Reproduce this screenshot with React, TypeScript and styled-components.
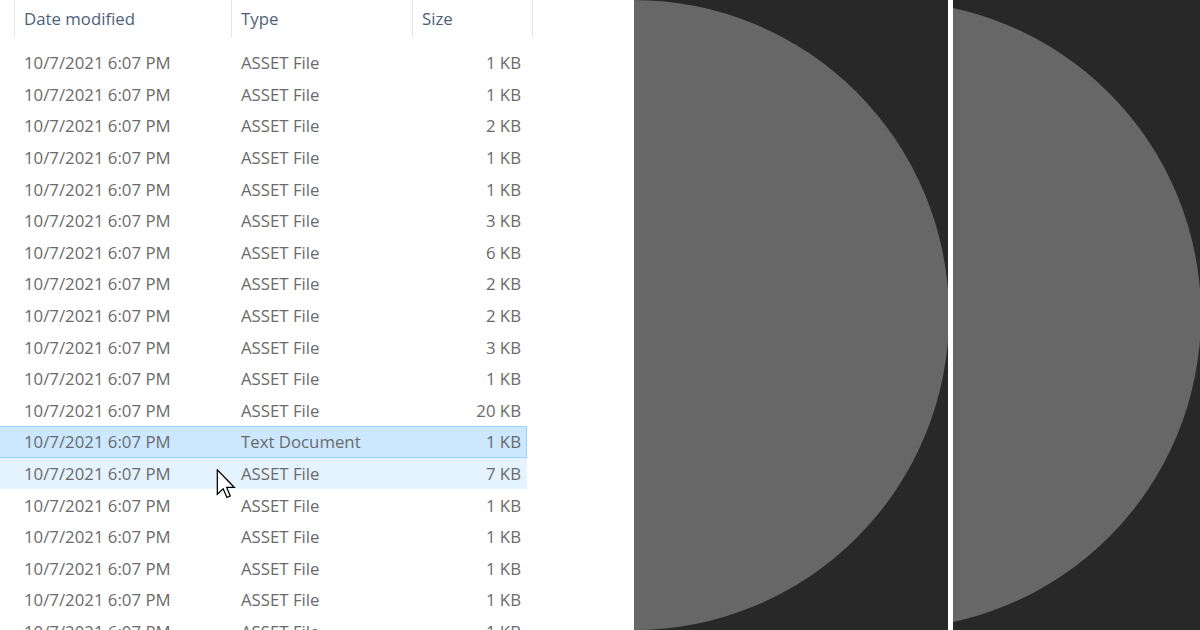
import React from "react";
import styled, { createGlobalStyle } from "styled-components";

const Global = createGlobalStyle`
  html, body { margin: 0; padding: 0; background: #fff; }
  body { font-family: "Open Sans", "Noto Sans", sans-serif; }
`;

const Page = styled.div`
  display: flex;
  width: 1200px;
  height: 630px;
  overflow: hidden;
  background: #fff;
`;

const Explorer = styled.div`
  position: relative;
  width: 634px;
  flex: none;
  background: #fff;
  font-family: "Open Sans", "Noto Sans", sans-serif;
  font-size: 16.8px;
`;

const Header = styled.div`
  display: flex;
  height: 47px;
  padding-left: 14px;
`;

const HeadCell = styled.div<{ $w: number; $last?: boolean }>`
  width: ${(p) => p.$w}px;
  box-sizing: border-box;
  height: 37px;
  padding: 7px 0 0 9px;
  color: #4c607a;
  border-left: 1px solid #e5e5e5;
  border-right: ${(p) => (p.$last ? "1px solid #e5e5e5" : "none")};
  line-height: 24px;
`;

const Rows = styled.div`
  display: flex;
  flex-direction: column;
`;

const Row = styled.div<{ $state?: "sel" | "hover" }>`
  display: grid;
  grid-template-columns: 231px 181px 1fr;
  align-items: center;
  width: 527px;
  height: 31.6px;
  box-sizing: border-box;
  flex: none;
  color: #6a6a6a;
  background: ${(p) =>
    p.$state === "sel" ? "#cce8ff" : p.$state === "hover" ? "#e5f3ff" : "transparent"};
  border: 1px solid ${(p) => (p.$state === "sel" ? "#99d1ff" : "transparent")};
  border-left: none;
`;

const DateCell = styled.span`
  padding-left: 24px;
  white-space: nowrap;
`;

const TypeCell = styled.span`
  padding-left: 10px;
  white-space: nowrap;
`;

const SizeCell = styled.span`
  text-align: right;
  padding-right: 5px;
  white-space: nowrap;
`;

const Cursor = styled.svg`
  position: absolute;
  left: 216px;
  top: 469px;
`;

const Panel = styled.div<{ $grow?: boolean }>`
  background: #282828;
  height: 630px;
  width: ${(p) => (p.$grow ? "auto" : "314px")};
  flex: ${(p) => (p.$grow ? "1" : "none")};
  overflow: hidden;
`;

const Gap = styled.div`
  width: 5px;
  flex: none;
  background: #fff;
`;

const sizes = [1, 1, 2, 1, 1, 3, 6, 2, 2, 3, 1, 20, 1, 7, 1, 1, 1, 1, 1];

export default function App() {
  return (
    <>
      <Global />
      <Page>
        <Explorer>
          <Header>
            <HeadCell $w={217}>Date modified</HeadCell>
            <HeadCell $w={181}>Type</HeadCell>
            <HeadCell $w={121} $last>
              Size
            </HeadCell>
          </Header>
          <Rows>
            {sizes.map((s, i) => (
              <Row key={i} $state={i === 12 ? "sel" : i === 13 ? "hover" : undefined}>
                <DateCell>10/7/2021 6:07 PM</DateCell>
                <TypeCell>{i === 12 ? "Text Document" : "ASSET File"}</TypeCell>
                <SizeCell>{s} KB</SizeCell>
              </Row>
            ))}
          </Rows>
          <Cursor width="20" height="30" viewBox="0 0 12 19">
            <path
              d="M0.5 0.5 L0.5 16 L4.2 12.5 L6.6 18 L8.7 17.1 L6.4 11.7 L11.3 11.7 Z"
              fill="#fff"
              stroke="#000"
              strokeWidth="0.8"
              strokeLinejoin="miter"
            />
          </Cursor>
        </Explorer>
        <Panel>
          <svg width="314" height="630" viewBox="0 0 314 630">
            <circle cx="0" cy="315" r="315" fill="#676767" />
          </svg>
        </Panel>
        <Gap />
        <Panel $grow>
          <svg width="247" height="630" viewBox="0 0 247 630">
            <circle cx="-66" cy="315" r="314" fill="#676767" />
          </svg>
        </Panel>
      </Page>
    </>
  );
}
